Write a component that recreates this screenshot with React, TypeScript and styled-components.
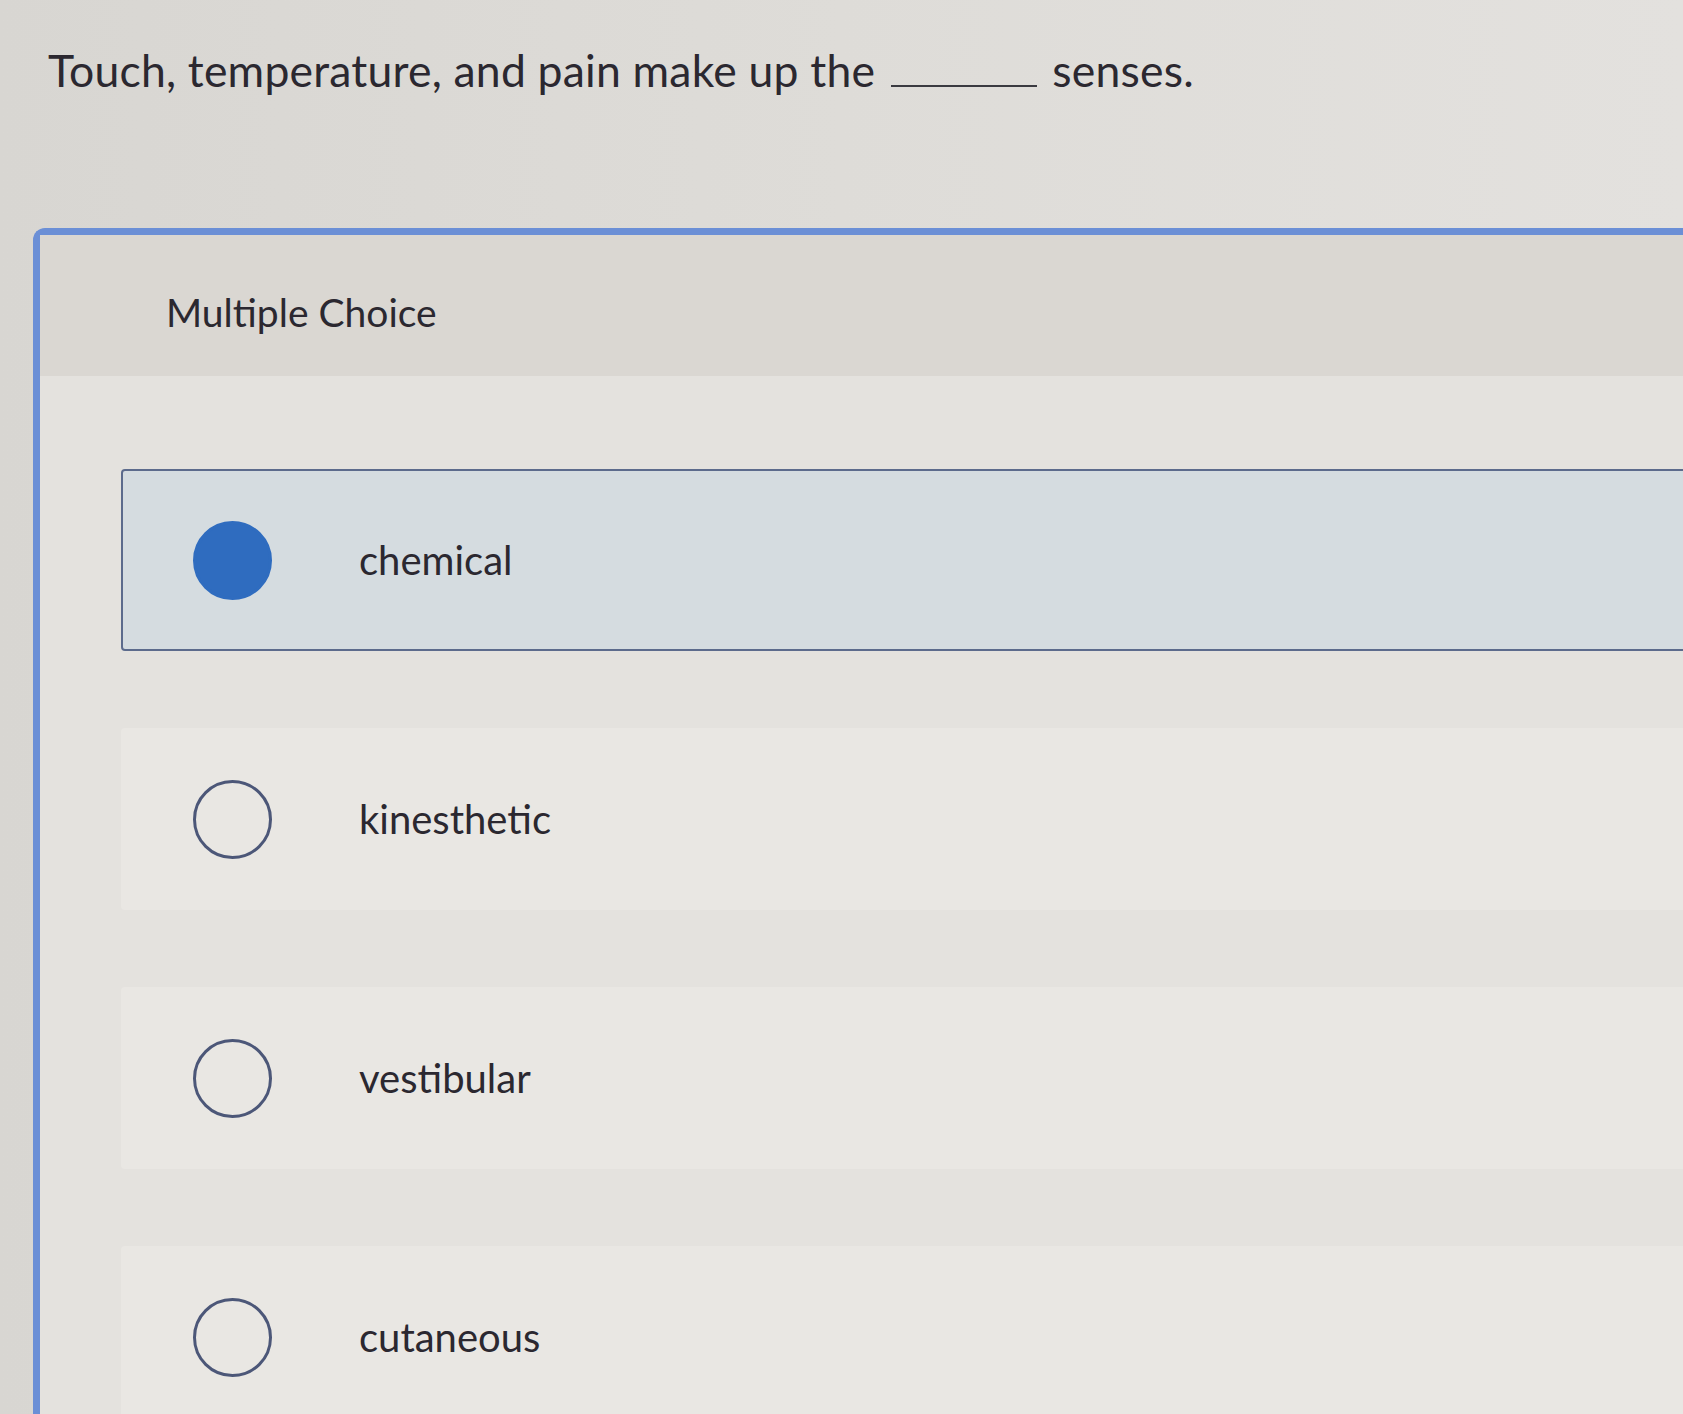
import styled, { createGlobalStyle } from "styled-components";

const GlobalStyle = createGlobalStyle`
    html, body {
        margin: 0;
        padding: 0;
        background: #dcdad6;
        font-family: Lato, "Open Sans", sans-serif;
        color: #2f2c33;
        overflow: hidden;
    }
`

const options = [
    {label: "chemical", selected: true},
    {label: "kinesthetic", selected: false},
    {label: "vestibular", selected: false},
    {label: "cutaneous", selected: false},
]

export default function App() {
    return (
        <>
            <GlobalStyle/>
            <Page>
                <Question>
                    Touch, temperature, and pain make up the <Blank/> senses.
                </Question>
                <Card>
                    <CardHeader>Multiple Choice</CardHeader>
                    <OptionList>
                        {options.map(o => (
                            <Option key={o.label} selected={o.selected}>
                                <Radio selected={o.selected}/>
                                <Label>{o.label}</Label>
                            </Option>
                        ))}
                    </OptionList>
                </Card>
            </Page>
        </>
    );
}

const Page = styled.main`
    width: 1683px;
    height: 1414px;
    display: flex;
    flex-direction: column;
    background: linear-gradient(90deg, #d8d6d2 0%, #dedcd8 50%, #e3e1de 100%);
`

const Question = styled.h1`
    margin: 0;
    padding: 44px 0 0 48px;
    font-size: 44.5px;
    font-weight: 400;
    line-height: 52px;
    letter-spacing: 0.2px;
    color: #2b2830;
`

const Blank = styled.span`
    display: inline-block;
    width: 146px;
    margin: 0 4px;
    border-bottom: 2px solid #3a3a40;
`

const Card = styled.section`
    margin: 132px -40px 0 33px;
    flex: 1;
    border-top: 7px solid #6b8fd6;
    border-left: 7px solid #6b8fd6;
    border-top-left-radius: 12px;
    background: #e4e2de;
    display: flex;
    flex-direction: column;
`

const CardHeader = styled.h2`
    margin: 0;
    height: 141px;
    box-sizing: border-box;
    padding: 12px 0 0 126px;
    display: flex;
    align-items: center;
    font-size: 39px;
    font-weight: 400;
    color: #2b2830;
    background: #dad7d2;
`

const OptionList = styled.div`
    display: flex;
    flex-direction: column;
    gap: 77px;
    padding: 93px 0 0 81px;
`

const Option = styled.div<{ selected?: boolean }>`
    height: 182px;
    box-sizing: border-box;
    display: flex;
    align-items: center;
    gap: 87px;
    padding-left: ${p => p.selected ? 70 : 72}px;
    border: ${p => p.selected ? "2px solid #5c6b8c" : "none"};
    border-radius: 4px;
    background: ${p => p.selected ? "#d5dce0" : "#e9e7e3"};
`

const Radio = styled.span<{ selected?: boolean }>`
    width: 79px;
    height: 79px;
    box-sizing: border-box;
    border-radius: 50%;
    flex-shrink: 0;
    border: 3px solid ${p => p.selected ? "#2f6cbf" : "#4c5778"};
    background: ${p => p.selected ? "#2f6cbf" : "transparent"};
`

const Label = styled.span`
    font-size: 40px;
    font-weight: 400;
    color: #2b2830;
`
